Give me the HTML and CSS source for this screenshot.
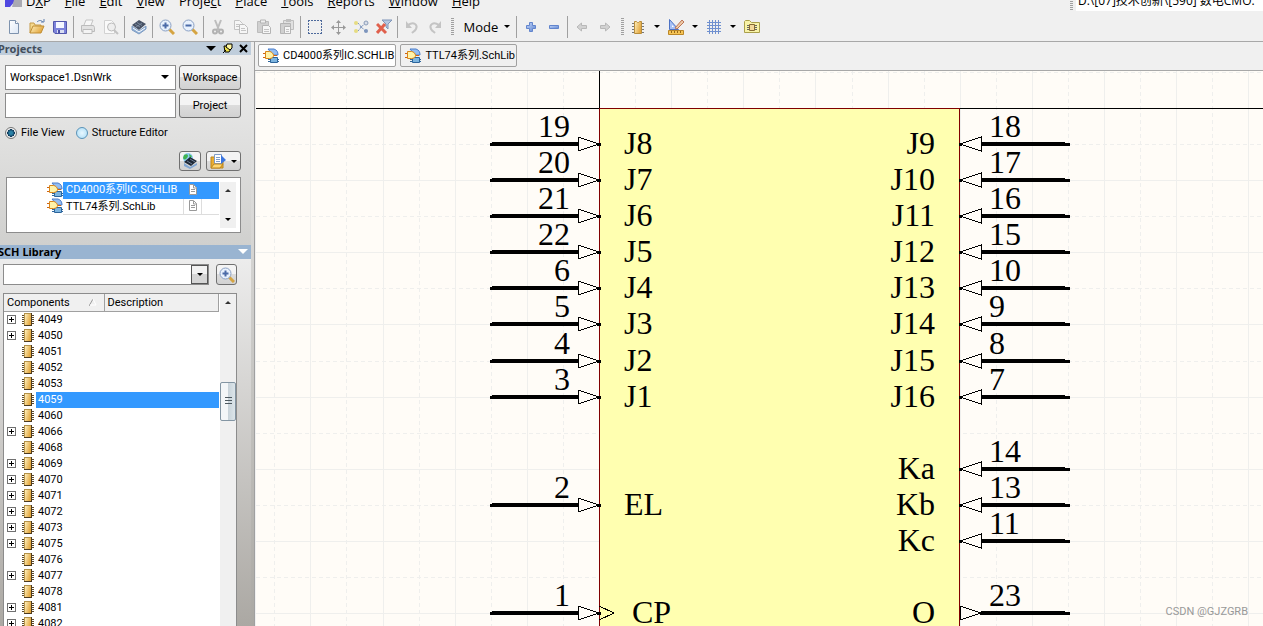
FILE: index.html
```html
<!DOCTYPE html>
<html lang="en">
<head>
    <meta charset="UTF-8">
    <meta name="viewport" content="width=device-width, initial-scale=1.0">
    <title>SCH Library Editor</title>
    <link rel="stylesheet" href="styles.css">
</head>
<body>
    <!-- Shared icons -->
    <svg class="sprite" aria-hidden="true">
        <defs>
            <linearGradient id="gold" x1="0" x2="1" y1="0" y2="0.4"><stop offset="0" stop-color="#fff0bd"/><stop offset="1" stop-color="#e2a63d"/></linearGradient>
            <linearGradient id="page" x1="0" x2="1" y1="0" y2="1"><stop offset="0" stop-color="#fff"/><stop offset="1" stop-color="#dce7f5"/></linearGradient>
            <linearGradient id="blue" x1="0" x2="1" y1="0" y2="1"><stop offset="0" stop-color="#c3d5fa"/><stop offset="1" stop-color="#5f86d0"/></linearGradient>
        </defs>
        <symbol id="i-new" viewBox="0 0 16 16"><path d="M3.5 1.5h6l3 3v10h-9z" fill="url(#page)" stroke="#7e93ae"/><path d="M9.500 1.500v3h3" fill="#fff" stroke="#7e93ae"/></symbol>
        <symbol id="i-open" viewBox="0 0 16 16"><path d="M1 14V4h4l1 2h6v2" fill="#f5d98e" stroke="#c69b48"/><path d="M1 14l3-7h11l-3 7z" fill="url(#gold)" stroke="#c08e35"/><path d="M8 3c2-2 4-2 6 0M12 3h3V0" fill="none" stroke="#5e7fae"/></symbol>
        <symbol id="i-save" viewBox="0 0 16 16"><path d="M1.500 2.500h13v12H3l-1.500-1.500z" fill="#7c83db" stroke="#5257ab"/><path d="M4 3h8v6H4z" fill="#f4f7ff"/><path d="M5 11h7v3H5z" fill="#d9def2"/><path d="M6 11h2v3H6z" fill="#4b50a8"/></symbol>
        <symbol id="i-print" viewBox="0 0 16 16"><path d="M4 6l2-5h7l-2 5" fill="#f7f7f7" stroke="#c4c4c4"/><path d="M1.500 6.500h12l1 2v4h-13z" fill="#e2e2e2" stroke="#bcbcbc"/><path d="M3 10.500h9v4H3z" fill="#f4f4f4" stroke="#bcbcbc"/></symbol>
        <symbol id="i-preview" viewBox="0 0 16 16"><path d="M1.500 1.500h7l3 3v10h-10z" fill="#fafafa" stroke="#d2d2d2"/><circle cx="8.500" cy="8" r="4" fill="#eee" stroke="#bbb"/><path d="M11 11l4 4" stroke="#c2c2c2" stroke-width="2"/></symbol>
        <symbol id="i-book" viewBox="0 0 16 16"><path d="M1 7l7 5 7-5v3l-7 5-7-4z" fill="#8fb0d6" stroke="#7f9cc2"/><path d="M2 9l6 4 6-4" stroke="#fff" fill="none"/><path d="M1 6l7-5 7 4-7 6z" fill="#465164"/><path d="M4 5l5 3M6 3.500l5 3M5 8l6-4" stroke="#7a889c"/></symbol>
        <symbol id="i-zoomin" viewBox="0 0 16 16"><path d="M10 10l5 5" stroke="#d5a442" stroke-width="3"/><circle cx="6.500" cy="6.500" r="5.500" fill="#e8f1fd" stroke="#8aa0c4"/><path d="M6.500 3.500v6M3.500 6.500h6" stroke="#4b6ba8" stroke-width="2"/></symbol>
        <symbol id="i-zoomout" viewBox="0 0 16 16"><path d="M10 10l5 5" stroke="#d5a442" stroke-width="3"/><circle cx="6.500" cy="6.500" r="5.500" fill="#e8f1fd" stroke="#8aa0c4"/><path d="M3.500 6.500h6" stroke="#4b6ba8" stroke-width="2"/></symbol>
        <symbol id="i-cut" viewBox="0 0 16 16"><path d="M5 1l4 10M11 1L7 11" stroke="#bdbdbd" stroke-width="2"/><circle cx="5" cy="12.500" r="2" fill="none" stroke="#b2b2b2" stroke-width="2"/><circle cx="11" cy="12.500" r="2" fill="none" stroke="#b2b2b2" stroke-width="2"/></symbol>
        <symbol id="i-copy" viewBox="0 0 16 16"><path d="M1.500 1.500h5l3 3v6h-8z" fill="#f6f6f6" stroke="#c4c4c4"/><path d="M6.500 5.500h5l3 3v6h-8z" fill="#f6f6f6" stroke="#bcbcbc"/><path d="M8 9.500h4M8 11.500h5M3 5.500h3M3 7.500h3" stroke="#c4c4c4"/></symbol>
        <symbol id="i-paste" viewBox="0 0 16 16"><path d="M1.500 2.500h11v11h-11z" fill="#d0d0d0" stroke="#bcbcbc"/><path d="M4.500 1h5v3h-5z" fill="#eee" stroke="#b4b4b4"/><path d="M6.500 6.500h6l2 2v6h-8z" fill="#f6f6f6" stroke="#b4b4b4"/><path d="M8 10.500h5M8 12.500h5" stroke="#c4c4c4"/></symbol>
        <symbol id="i-pastes" viewBox="0 0 16 16"><path d="M4.500 1.500h10v9h-10z" fill="#e0e0e0" stroke="#bebebe"/><path d="M1.500 4.500h10v10h-10z" fill="#d0d0d0" stroke="#b4b4b4"/><path d="M7 0h5v3H7z" fill="#c0c0c0"/><path d="M5.500 7.500h6v7h-6z" fill="#f6f6f6" stroke="#b4b4b4"/><path d="M7 10.500h3M7 12.500h3" stroke="#c4c4c4"/></symbol>
        <symbol id="i-select" viewBox="0 0 16 16"><path d="M1 1.500h14M1 14.500h14M1.500 1v14M14.500 1v14" fill="none" stroke="#4e6a9c" stroke-dasharray="2 1"/></symbol>
        <symbol id="i-move" viewBox="0 0 16 16"><path d="M8.500 2v13M2 8.500h13" stroke="#999"/><path d="M8.500 1L6 4h5zM8.500 16L6 13h5zM1 8.500L4 6v5zM16 8.500L13 6v5z" fill="#999"/></symbol>
        <symbol id="i-cross" viewBox="0 0 16 16"><path d="M5 4l7 8M5 12l7-8" stroke="#7d95bd" stroke-dasharray="2 1"/><circle cx="3" cy="4" r="2" fill="#e6dc82"/><circle cx="3" cy="12" r="2" fill="#e6dc82"/><circle cx="13" cy="4" r="2" fill="#d8dee8" stroke="#8b9cb8"/><circle cx="13" cy="12" r="2" fill="#7d95bd"/><circle cx="8" cy="8" r="1" fill="#7d95bd"/></symbol>
        <symbol id="i-filter" viewBox="0 0 16 16"><path d="M6 1h10l-4 4v5l-2-2V5z" fill="#b7c8e2" stroke="#7f95b8"/><path d="M1 5l9 9M9 5l-8 9" stroke="#e0604c" stroke-width="3"/></symbol>
        <symbol id="i-undo" viewBox="0 0 16 16"><path d="M4 6c6-4 10 0 8 4-1 2-3 3-4 4" fill="none" stroke="#c4c4c4" stroke-width="2"/><path d="M2 2v7h6z" fill="#c4c4c4"/></symbol>
        <symbol id="i-redo" viewBox="0 0 16 16"><path d="M12 6c-6-4-10 0-8 4 1 2 3 3 4 4" fill="none" stroke="#c4c4c4" stroke-width="2"/><path d="M14 2v7H8z" fill="#c4c4c4"/></symbol>
        <symbol id="i-plus" viewBox="0 0 16 16"><path d="M6.500 3.500h3v3h3v3h-3v3h-3v-3h-3v-3h3z" fill="url(#blue)" stroke="#6285cd"/></symbol>
        <symbol id="i-minus" viewBox="0 0 16 16"><path d="M3.500 6.500h9v3h-9z" fill="url(#blue)" stroke="#6285cd"/></symbol>
        <symbol id="i-left" viewBox="0 0 16 16"><path d="M3 8l4.500-4v2.500h5v3h-5V12z" fill="#d2d2d2" stroke="#b8b8b8"/></symbol>
        <symbol id="i-right" viewBox="0 0 16 16"><path d="M13 8L8.500 4v2.500h-5v3h5V12z" fill="#d2d2d2" stroke="#b8b8b8"/></symbol>
        <symbol id="i-part" viewBox="0 0 16 16"><path d="M2 4.500h12M2 7.500h12M2 10.500h12M2 13.500h12" stroke="#777"/><path d="M4.500 2.500h2l1 1h1l1-1h2v12h-7z" fill="url(#gold)" stroke="#b88d3c"/></symbol>
        <symbol id="i-draw" viewBox="0 0 16 16"><path d="M1.500 0.500v10h9z" fill="#a6c0f5" stroke="#4d72c4"/><path d="M4 6v2h2z" fill="#fff"/><path d="M7 9l7-8 2 2-7 7z" fill="#eec9a4" stroke="#bb7557"/><path d="M0.500 11.500h15v4h-15z" fill="#f6c455" stroke="#bb8727"/><path d="M3.500 12v2M6.500 12v2M9.500 12v2M12.500 12v2" stroke="#96691b"/></symbol>
        <symbol id="i-grid" viewBox="0 0 16 16"><path d="M1 3.500h14M1 6.500h14M1 9.500h14M1 12.500h14M3.500 1v14M6.500 1v14M9.500 1v14M12.500 1v14" stroke="#6f90cf"/></symbol>
        <symbol id="i-folder" viewBox="0 0 16 16"><path d="M0.500 13.500v-11l1-1h4l2 2h8v10z" fill="#f8f3a8" stroke="#aaa04c"/><path d="M3 6.500h10M3 8.500h10M3 10.500h10" stroke="#666"/><path d="M5.500 5.500h5v6h-5z" fill="#f3d99a" stroke="#866a32"/></symbol>
        <symbol id="i-sch" viewBox="0 0 16 16"><path d="M5 1h6c3 1 4 3 4 6h-5z" fill="#92bdf3" stroke="#4b7cc8"/><path d="M7.500 9.500h7v5h-7z" fill="#7cb4df" stroke="#2d659c"/><path d="M5 11.500h2M5 13.500h2M15 11.500h1M15 13.500h1" stroke="#2d659c"/><path d="M0 5.500h3M0 9.500h3M9 7.500h5" stroke="#d06413"/><path d="M2.500 3.500h4c2 0 4 2 4 4s-2 3-4 3h-4z" fill="#fff3a9" stroke="#d98518"/></symbol>
        <symbol id="i-chip" viewBox="0 0 12 14"><path d="M0 2.500h12M0 4.500h12M0 6.500h12M0 8.500h12M0 10.500h12" stroke="#5e4b2c"/><path d="M2 0h8v13H2z" fill="#4d3a1e"/><path d="M2 0h7v12H2z" fill="#b3924a"/><path d="M3 1h6v11H3z" fill="url(#gold)"/></symbol>
        <symbol id="i-doc" viewBox="0 0 10 12"><path d="M1.500 0.500h4l3 3v7h-7z" fill="#fff" stroke="#999"/><path d="M5.500 1v3h3M3 5.500h4M3 7.500h4" fill="none" stroke="#999"/></symbol>
        <symbol id="i-compile" viewBox="0 0 16 16"><circle cx="6" cy="5" r="5" fill="#8fcdf5"/><path d="M2 2c4-2 5 1 3 3S2 7 1 5zM7 1l3 2-2 3z" fill="#42b351"/><path d="M2 10l6 4 7-4v2l-7 4-6-3z" fill="#81a7d4"/><path d="M2 9l6-5 7 4-6 5z" fill="#1e2938"/><path d="M5 8l5 3M8 6l5 3" stroke="#6c7d95"/></symbol>
        <symbol id="i-docs" viewBox="0 0 16 16"><path d="M1 4h4l2 2h6v9H1z" fill="#e9ad30" stroke="#bd861c"/><path d="M4.500 1.500h7v9h-7z" fill="#fff" stroke="#7e9cc8"/><path d="M6 4.500h4M6 6.500h4M6 8.500h4" stroke="#7e9cc8"/><path d="M1 15l3-4h9l-3 4z" fill="#ffd873" stroke="#bd861c"/><path d="M11 2l5 5-5 4z" fill="#3a75df"/></symbol>
    </svg>

    <header class="menubar">
        <div class="logo"><svg width="18" height="16" viewBox="0 0 18 16"><path d="M0 0h11v9L5 16H0z" fill="#5048e0"/><path d="M9 9h8v7H7z" fill="#a9a9b2"/></svg></div>
        <nav class="menu">
            <a href="#">D<u>X</u>P</a>
            <a href="#"><u>F</u>ile</a>
            <a href="#"><u>E</u>dit</a>
            <a href="#"><u>V</u>iew</a>
            <a href="#">Proje<u>c</u>t</a>
            <a href="#"><u>P</u>lace</a>
            <a href="#"><u>T</u>ools</a>
            <a href="#"><u>R</u>eports</a>
            <a href="#"><u>W</u>indow</a>
            <a href="#"><u>H</u>elp</a>
        </nav>
        <span class="grip"></span>
        <input class="path" type="text" aria-label="Document path" value="D:\[07]技术创新\[590] 数电CMO:">
    </header>

    <div class="toolbar" id="toolbar"></div>

    <div class="workspace">
        <aside class="side">
            <section class="projects">
                <div class="panel-title">
                    <h2>Projects</h2>
                    <button class="plain" aria-label="Panel menu"><svg width="10" height="6"><path d="M0 0h10L5 5z"/></svg></button>
                    <button class="plain" aria-label="Pin"><svg width="11" height="11" viewBox="0 0 11 11"><path d="M1 10l3-3M2 3h5l2 3-2 3H3z" fill="#eee24a" stroke="#000"/><path d="M5 1h5v4L8 7 4 4z" fill="#fff7a0" stroke="#000"/></svg></button>
                    <button class="plain" aria-label="Close"><svg width="9" height="9"><path d="M1 1l7 7M8 1l-7 7" stroke="#000" stroke-width="2"/></svg></button>
                </div>
                <div class="project-form">
                    <div class="combo">
                        <select aria-label="Workspace file"><option>Workspace1.DsnWrk</option></select>
                    </div>
                    <button class="btn">Workspace</button>
                    <input class="field" type="text" aria-label="Project file">
                    <button class="btn">Project</button>
                </div>
                <div class="views">
                    <label><input type="radio" name="view" checked>File View</label>
                    <label><input type="radio" name="view">Structure Editor</label>
                </div>
                <div class="actions">
                    <button class="btn" aria-label="Compile"><svg width="16" height="16"><use href="#i-compile"/></svg></button>
                    <button class="btn split" aria-label="Open documents"><svg width="16" height="16"><use href="#i-docs"/></svg><span class="caret"></span></button>
                </div>
                <div class="file-list">
                    <table>
                        <tr class="selected"><td class="icon"><svg width="16" height="16"><use href="#i-sch"/></svg></td><td class="name">CD4000系列IC.SCHLIB</td><td class="doc"><svg width="10" height="12"><use href="#i-doc"/></svg></td><td></td></tr>
                        <tr><td class="icon"><svg width="16" height="16"><use href="#i-sch"/></svg></td><td class="name">TTL74系列.SchLib</td><td class="doc"><svg width="10" height="12"><use href="#i-doc"/></svg></td><td></td></tr>
                    </table>
                    <div class="scroll">
                        <button class="plain" aria-label="Scroll up"><span class="up"></span></button>
                        <button class="plain" aria-label="Scroll down"><span class="caret"></span></button>
                    </div>
                </div>
            </section>

            <section class="library">
                <div class="panel-title active">
                    <h2>SCH Library</h2>
                    <button class="plain" aria-label="Panel menu"><svg width="10" height="6"><path d="M0 0h10L5 5z" fill="#fff"/></svg></button>
                </div>
                <div class="search">
                    <div class="search-box">
                        <input type="text" aria-label="Filter components">
                        <button aria-label="Filter history"><span class="caret"></span></button>
                    </div>
                    <button class="btn" aria-label="Find component"><svg width="16" height="16"><use href="#i-zoomin"/></svg></button>
                </div>
                <div class="components">
                    <table>
                        <thead>
                            <tr><th class="col-name">Components <svg width="8" height="7"><path d="M0 7l4-7" stroke="#999"/><path d="M4 0l3 6H1" stroke="#fff" fill="none"/></svg></th><th>Description</th></tr>
                        </thead>
                        <tbody id="componentRows"></tbody>
                    </table>
                    <div class="scroll">
                        <button class="plain" aria-label="Scroll up"><span class="up"></span></button>
                        <div class="thumb"></div>
                    </div>
                </div>
            </section>
        </aside>

        <main class="editor">
            <div class="tabs">
                <button class="tab current"><svg width="16" height="16"><use href="#i-sch"/></svg>CD4000系列IC.SCHLIB</button>
                <button class="tab"><svg width="16" height="16"><use href="#i-sch"/></svg>TTL74系列.SchLib</button>
            </div>
            <div class="sheet">
                <svg class="drawing" role="img" aria-label="4059 symbol">
                    <g id="origin" transform="translate(343 37)"></g>
                </svg>
                <span class="watermark">CSDN @GJZGRB</span>
            </div>
        </main>
    </div>

    <script>
        // '|' separator, ':' grip, '+' after a name adds a drop-down arrow
        const tools = ['new', 'open', 'save', '|', 'print', 'preview', '|', 'book', '|', 'zoomin', 'zoomout', '|',
            'cut', 'copy', 'paste', 'pastes', '|', 'select', 'move', 'cross', 'filter', '|', 'undo', 'redo', ':',
            'Mode', '|', 'plus', 'minus', '|', 'left', 'right', ':', 'part+', 'draw+', 'grid+', 'folder'];

        document.getElementById('toolbar').innerHTML = tools.map(t => {
            if (t === '|') return '<span class="sep"></span>';
            if (t === ':') return '<span class="grip"></span>';
            if (t === 'Mode') return '<button class="tool mode">Mode<span class="caret"></span></button>';
            const name = t.replace('+', '');
            const caret = t.endsWith('+') ? '<span class="caret"></span>' : '';
            return `<button class="tool${caret ? ' drop' : ''}" aria-label="${name}"><svg width="16" height="16"><use href="#i-${name}"/></svg>${caret}</button>`;
        }).join('');

        const components = ['+4049', '+4050', '4051', '4052', '4053', '4059', '4060', '+4066', '4068', '+4069',
            '+4070', '+4071', '+4072', '+4073', '+4075', '4076', '+4077', '4078', '+4081', '+4082'];

        document.getElementById('componentRows').innerHTML = components.map(c => {
            const name = c.replace('+', '');
            const box = c.startsWith('+') ? '<button class="expand" aria-label="Expand"></button>' : '<span class="no-expand"></span>';
            return `<tr class="${name === '4059' ? 'selected' : ''}"><td colspan="2"><div class="row">${box}<svg width="12" height="14"><use href="#i-chip"/></svg><span class="label">${name}</span></div></td></tr>`;
        }).join('');

        // Symbol drawing, one grid step between pins
        const STEP = 36.08;
        const WIDTH = 360;
        const at = n => Math.round(n * STEP);
        const leftPins = [[1, 19, 'J8'], [2, 20, 'J7'], [3, 21, 'J6'], [4, 22, 'J5'], [5, 6, 'J4'], [6, 5, 'J3'],
            [7, 4, 'J2'], [8, 3, 'J1'], [11, 2, 'EL'], [14, 1, 'CP']];
        const rightPins = [[1, 18, 'J9'], [2, 17, 'J10'], [3, 16, 'J11'], [4, 15, 'J12'], [5, 10, 'J13'], [6, 9, 'J14'],
            [7, 8, 'J15'], [8, 7, 'J16'], [10, 14, 'Ka'], [11, 13, 'Kb'], [12, 11, 'Kc'], [14, 23, 'O']];

        let out = '';
        for (let n = -10; n <= 60; n++) {
            const kind = n % 2 ? 'grid dashed' : 'grid';
            out += `<path class="${kind}" d="M${at(n)} -37V2000"/>`;
            if (n > -2) out += `<path class="${kind}" d="M-343 ${at(n)}H3000"/>`;
        }
        out += '<path class="axis" d="M-343 0H3000M0 -37V0"/>';
        out += `<rect class="body" x="0" y="0" width="${WIDTH}" height="2000"/>`;

        leftPins.forEach(([n, num, name]) => {
            const y = at(n);
            out += `<path class="wire" d="M-107 ${y}H-21"/><path class="end" d="M-109 ${y}h4M-2 ${y}h4"/>
                <path class="arrow" d="M-21 ${y - 7}L0 ${y}L-21 ${y + 7}z"/>
                <text x="-29" y="${y - 7}" text-anchor="end">${num}</text>
                <text x="${name === 'CP' ? 33 : 25}" y="${y + 10}">${name}</text>`;
            if (name === 'CP') out += `<path class="clock" d="M0 ${y - 7}L15 ${y}L0 ${y + 7}"/>`;
        });
        rightPins.forEach(([n, num, name]) => {
            const y = at(n);
            const tip = name === 'O' ? WIDTH + 22 : WIDTH + 1;
            const base = name === 'O' ? WIDTH + 1 : WIDTH + 22;
            out += `<path class="wire" d="M${WIDTH + 22} ${y}h84"/><path class="end" d="M${WIDTH + 105} ${y}h6M${tip - 1} ${y}h3"/>
                <path class="arrow" d="M${base} ${y - 7}L${tip} ${y}L${base} ${y + 7}z"/>
                <text x="${WIDTH + 30}" y="${y - 7}">${num}</text>
                <text x="${WIDTH - 24}" y="${y + 10}" text-anchor="end">${name}</text>`;
        });
        document.getElementById('origin').innerHTML = out;
    </script>
</body>
</html>
```
FILE: styles.css
```css
* { box-sizing: border-box; }
body {
    margin: 0;
    height: 100vh;
    display: flex;
    flex-direction: column;
    overflow: hidden;
    background: #f0f0f0;
    color: #000;
    font: 11px/16px Roboto, "Noto Sans CJK SC", sans-serif;
}
svg { display: block; flex: none; }
button, input, select { font: inherit; color: inherit; margin: 0; }
.sprite { position: absolute; width: 0; height: 0; }

/* Menu bar, scrolled partly off the top */
.menubar {
    display: flex;
    align-items: flex-end;
    height: 11px;
    padding-left: 5px;
    font: 13px/20px "Open Sans", "Noto Sans CJK SC", sans-serif;
    flex: none;
}
.logo { margin-bottom: 4px; }
.menu { display: flex; gap: 14px; margin-left: 3px; flex: 1; }
.menu a { color: #000; text-decoration: none; }
.grip {
    width: 3px;
    height: 18px;
    background: repeating-linear-gradient(#a0a0a0 0 1px, #f0f0f0 1px 2px);
    flex: none;
}
.menubar .grip { margin-right: 3px; }
.path {
    width: 187px;
    height: 20px;
    padding: 0 2px;
    border: 0;
    background: #fff;
    font-size: 12px;
}

/* Toolbar */
.toolbar {
    display: flex;
    align-items: center;
    height: 31px;
    padding: 1px 0 0 2px;
    border-bottom: 1px solid #a8a8a8;
    font: 13px/20px "Open Sans", sans-serif;
    flex: none;
}
.tool {
    display: flex;
    align-items: center;
    justify-content: center;
    width: 23px;
    height: 24px;
    padding: 0;
    border: 0;
    background: none;
}
.tool.mode { width: 54px; gap: 6px; margin-left: 4px; }
.tool.drop { width: 38px; gap: 8px; }
.sep { width: 1px; height: 22px; margin: 0 2px; background: #a0a0a0; }
.toolbar .grip { margin: 0 2px 0 5px; }
.caret {
    border: 3px solid transparent;
    border-top-color: #000;
    border-bottom: 0;
}
.up {
    border: 3px solid transparent;
    border-bottom-color: #333;
    border-top: 0;
}

.workspace { display: flex; flex: 1; min-height: 0; }

/* Side panels */
.side {
    width: 255px;
    display: flex;
    flex-direction: column;
    padding-right: 3px;
    border-right: 1px solid #a0a0a0;
    background: linear-gradient(#ededed, #aaa8a3);
    flex: none;
}
.projects { height: 203px; background: linear-gradient(#efefef, #d0d0ce); flex: none; }
.library { flex: 1; min-height: 0; display: flex; flex-direction: column; background: linear-gradient(#efefef, #aba8a3); }
.panel-title {
    display: flex;
    align-items: center;
    gap: 6px;
    height: 13px;
    padding-right: 3px;
    background: #bfcddb;
    color: #434e5c;
}
.panel-title.active { height: 14px; background: #99b4d1; color: #000; flex: none; }
.panel-title h2 {
    flex: 1;
    margin: 0 0 0 -2px;
    font: bold 11px/14px "Noto Sans", sans-serif;
}
.plain { display: flex; padding: 0; border: 0; background: none; }

.btn {
    display: flex;
    align-items: center;
    justify-content: center;
    padding: 0;
    border: 1px solid #707070;
    border-radius: 3px;
    background: linear-gradient(#f4f4f4 50%, #dcdcdc 50%, #d2d2d2);
}
.project-form {
    display: grid;
    grid-template-columns: 1fr 62px;
    grid-auto-rows: 25px;
    gap: 3px;
    padding: 10px 10px 0 5px;
}
.combo { position: relative; display: flex; }
.combo::after {
    content: "";
    position: absolute;
    right: 7px;
    top: 10px;
    border: 4px solid transparent;
    border-top-color: #000;
    border-bottom: 0;
}
.combo select, .field {
    width: 100%;
    min-width: 0;
    padding: 0 4px;
    border: 1px solid #8c8c8c;
    border-radius: 0;
    background: #fff;
    appearance: none;
}
.views { display: flex; gap: 11px; padding: 7px 5px; }
.views label { display: flex; align-items: center; gap: 4px; }
.views input {
    appearance: none;
    width: 12px;
    height: 12px;
    border: 1px solid #5a93b8;
    border-radius: 50%;
    background: radial-gradient(#e8f7ff, #a9dcf6);
}
.views input:checked { border-color: #777; background: radial-gradient(#2b83a8 0 20%, #123c5c 50%, #f0f0f0 55%); }
.actions { display: flex; justify-content: flex-end; gap: 5px; padding: 3px 10px 0 0; }
.actions .btn { width: 22px; height: 20px; }
.actions .split { width: 35px; gap: 5px; }

.file-list {
    display: flex;
    height: 56px;
    margin: 6px 10px 0 6px;
    padding: 4px;
    padding-left: 40px;
    border: 1px solid #8c8c8c;
    background: #fff;
}
table { border-collapse: collapse; border-spacing: 0; }
.file-list table { flex: 1; height: 32px; }
.file-list td { height: 16px; padding: 0; line-height: 15px; border-bottom: 1px solid #ddd; }
.file-list .icon { width: 16px; border: 0; }
.file-list .name { padding-left: 3px; white-space: nowrap; }
.file-list .doc { width: 18px; padding-left: 4px; border-left: 1px solid #ddd; border-right: 1px solid #ddd; }
.file-list td:last-child { width: 18px; }
.file-list .selected td:not(.icon) { background: #3399ff; color: #fff; border-color: #3399ff; }
.scroll {
    display: flex;
    flex-direction: column;
    justify-content: space-between;
    width: 16px;
    margin-left: 1px;
    background: #f0f0f0;
    flex: none;
}
.scroll .plain { width: 16px; height: 17px; align-items: center; justify-content: center; }

.search { display: flex; gap: 7px; padding: 5px 14px 0 3px; height: 33px; flex: none; }
.search-box { display: flex; flex: 1; height: 21px; border: 1px solid #8c8c8c; background: #fff; }
.search-box input { flex: 1; min-width: 0; border: 0; padding: 0 3px; }
.search-box button {
    display: flex;
    align-items: center;
    justify-content: center;
    width: 17px;
    padding: 0;
    border: 1px solid #555;
    background: linear-gradient(#f2f2f2 50%, #d5d5d5 50%);
}
.search .btn { width: 21px; height: 21px; }

.components {
    display: flex;
    flex: 1;
    min-height: 0;
    margin: 1px 14px 0 3px;
    border: 1px solid #8c8c8c;
    border-bottom: 0;
    background: #fff;
    overflow: hidden;
}
.components table { flex: 1; align-self: flex-start; table-layout: fixed; }
.components th {
    height: 17px;
    padding: 0 3px;
    line-height: 15px;
    border-bottom: 1px solid #a0a0a0;
    border-right: 1px solid #a0a0a0;
    background: #f0f0f0;
    font-weight: normal;
    text-align: left;
}
.components .col-name { width: 100px; }
.components th svg { display: inline; margin-left: 16px; }
.components td { height: 16px; padding: 0; }
.row { display: flex; align-items: center; height: 16px; padding-left: 3px; }
.row svg { margin: 0 2px 0 6px; }
.row .label { flex: 1; padding-left: 2px; }
.selected .label { background: #3399ff; color: #fff; }
.expand, .no-expand { width: 9px; height: 9px; flex: none; }
.expand {
    padding: 0;
    border: 1px solid #707070;
    background:
        linear-gradient(#000, #000) center / 5px 1px no-repeat,
        linear-gradient(#000, #000) center / 1px 5px no-repeat,
        #fff;
}
.components .scroll { justify-content: flex-start; }
.thumb {
    height: 39px;
    margin-top: 71px;
    border: 1px solid #8395a3;
    border-radius: 2px;
    background:
        repeating-linear-gradient(#4d5960 0 1px, transparent 1px 3px) center / 7px 9px no-repeat,
        linear-gradient(90deg, #f3f6f8 50%, #c8d3da 50%, #dce5ea);
}

/* Editor */
.editor { flex: 1; min-width: 0; display: flex; flex-direction: column; }
.tabs { display: flex; gap: 4px; height: 29px; padding: 2px 3px; border-bottom: 1px solid #a8a8a8; flex: none; }
.tab {
    display: flex;
    align-items: center;
    gap: 4px;
    height: 23px;
    padding: 0 1px 0 4px;
    border: 1px solid #a0a0a0;
    border-radius: 2px;
    background: #f0f0f0;
    white-space: nowrap;
}
.tab.current { background: #fff; }
.sheet { position: relative; flex: 1; min-height: 0; margin-left: 1px; background: #fffcf7; }
.drawing { width: 100%; height: 100%; shape-rendering: crispEdges; }
.drawing text { font: 32px "Liberation Serif", serif; }
.grid { stroke: #efefed; stroke-width: 1; fill: none; }
.dashed { stroke-dasharray: 4 3; }
.axis { stroke: #000; fill: none; }
.body { fill: #ffffb0; stroke: #800000; }
.wire { stroke: #000; stroke-width: 4; }
.end { stroke: #000; stroke-width: 3; }
.arrow { fill: #fffcf7; stroke: #000; }
.clock { fill: none; stroke: #000; }
.watermark {
    position: absolute;
    right: 15px;
    bottom: 6px;
    color: #999;
}
```
